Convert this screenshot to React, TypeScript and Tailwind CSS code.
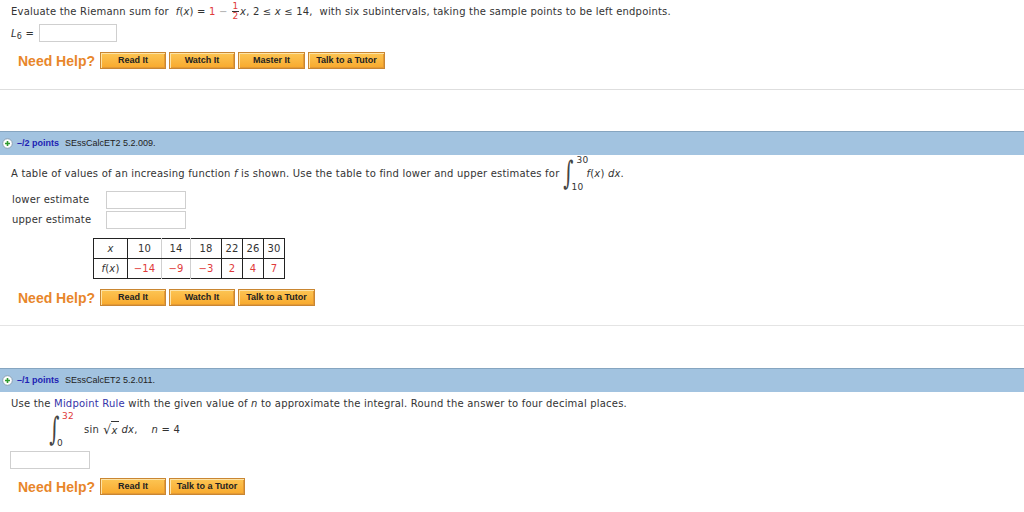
import React from 'react';

const HelpButton: React.FC<{ label: string; width: string }> = ({ label, width }) => (
    <button
        className={`${width} h-[17px] border border-[#c98632] bg-gradient-to-b from-[#fcc553] to-[#f8a92b] shadow-[inset_1px_1px_0_#fde3a6,inset_-1px_-1px_0_#e49a34] text-[9px] font-bold text-[#222] font-['Liberation_Sans',Arial,sans-serif] leading-none tracking-normal`}
    >
        {label}
    </button>
);

const NeedHelp: React.FC<{ buttons: { label: string; width: string }[] }> = ({ buttons }) => (
    <div className="flex items-center pl-[18px] tracking-normal">
        <span className="w-[82px] shrink-0 whitespace-nowrap text-[14px] font-bold text-[#e8862a] font-['Liberation_Sans',Arial,sans-serif] leading-none">Need Help?</span>
        <div className="flex gap-[3px]">
            {buttons.map((b) => (
                <HelpButton key={b.label} label={b.label} width={b.width} />
            ))}
        </div>
    </div>
);

const PlusIcon: React.FC = () => (
    <svg width="11" height="11" viewBox="0 0 11 11">
        <circle cx="5.5" cy="5.5" r="4.8" fill="#fff" stroke="#8aa0b4" strokeWidth="1" />
        <path d="M5.5 3v5M3 5.5h5" stroke="#2f9a2f" strokeWidth="1.6" />
    </svg>
);

const QuestionHeader: React.FC<{ points: string; code: string }> = ({ points, code }) => (
    <div className="h-[24px] border-t border-[#86a5c0] bg-[#a2c3e0] flex items-center pl-[2px] gap-[4px] font-['Liberation_Sans',Arial,sans-serif] text-[9px] tracking-normal">
        <PlusIcon />
        <span className="font-bold text-[#1d22b3]">–/{points} points</span>
        <span className="text-[#222] ml-[2px]">{code}</span>
    </div>
);

const Input: React.FC<{ className?: string }> = ({ className }) => (
    <div className={`h-[18px] border border-[#cfcfcf] bg-white ${className ?? ''}`} />
);

const Integral: React.FC<{ upper: string; lower: string; upperRed?: boolean }> = ({ upper, lower, upperRed }) => (
    <div className="relative w-[22px] h-[33px] shrink-0">
        <span className="absolute left-[-3px] top-[0px] h-[33px] text-[28px] leading-[33px] font-['DejaVu_Serif',serif] text-[#444] scale-y-[1.15] scale-x-[0.7]">∫</span>
        <span className={`absolute left-[12px] top-[-2px] text-[9px] leading-[10px] ${upperRed ? 'text-[#e03a3a]' : ''}`}>{upper}</span>
        <span className="absolute left-[7px] bottom-[-2px] text-[9px] leading-[10px]">{lower}</span>
    </div>
);

const cols = [
    { x: '10', f: '−14', w: 'w-[34px]' },
    { x: '14', f: '−9', w: 'w-[29px]' },
    { x: '18', f: '−3', w: 'w-[31px]' },
    { x: '22', f: '2', w: 'w-[21px]' },
    { x: '26', f: '4', w: 'w-[21px]' },
    { x: '30', f: '7', w: 'w-[21px]' },
];

const App: React.FC = () => {
    return (
        <div className="w-[1024px] h-[512px] overflow-hidden bg-white text-[#333] font-['DejaVu_Sans',Verdana,sans-serif] text-[10px] tracking-[0.2px]">
            {/* previous question tail */}
            <div className="pt-[2px] pl-[11px] leading-[12px] flex items-center whitespace-pre">
                <span>Evaluate the Riemann sum for  <i>f</i>(<i>x</i>) = <span className="text-[#e03a3a]">1</span> <span className="text-[#aaa]">−</span> </span>
                <span className="inline-flex flex-col items-center text-[#e03a3a] text-[9px] leading-[9px] mx-[1px]">
                    <span>1</span>
                    <span className="w-[7px] border-t border-[#333]" />
                    <span>2</span>
                </span>
                <span><i>x</i>, 2 ≤ <i>x</i> ≤ 14,  with six subintervals, taking the sample points to be left endpoints.</span>
            </div>
            <div className="mt-[3px] pl-[11px] flex items-center gap-[4px]">
                <span><i>L</i><sub className="text-[8px]">6</sub> =</span>
                <Input className="w-[78px] ml-[1px]" />
            </div>
            <div className="mt-[10px]">
                <NeedHelp
                    buttons={[
                        { label: 'Read It', width: 'w-[66px]' },
                        { label: 'Watch It', width: 'w-[66px]' },
                        { label: 'Master It', width: 'w-[67px]' },
                        { label: 'Talk to a Tutor', width: 'w-[77px]' },
                    ]}
                />
            </div>
            <div className="mt-[20px] border-t border-[#dedede]" />

            {/* question 2 */}
            <div className="mt-[41px]">
                <QuestionHeader points="2" code="SEssCalcET2 5.2.009." />
            </div>
            <div className="mt-[2px] pl-[11px] flex items-center h-[33px]">
                <span>A table of values of an increasing function <i>f</i> is shown. Use the table to find lower and upper estimates for</span>
                <div className="ml-[5px]">
                    <Integral upper="30" lower="10" />
                </div>
                <span><i>f</i>(<i>x</i>) <i>dx</i>.</span>
            </div>
            <div className="pl-[12px] flex flex-col gap-[1px]">
                <div className="flex items-center h-[19px]">
                    <span className="w-[94px]">lower estimate</span>
                    <Input className="w-[80px]" />
                </div>
                <div className="flex items-center h-[19px]">
                    <span className="w-[94px]">upper estimate</span>
                    <Input className="w-[80px]" />
                </div>
            </div>
            <table className="mt-[9px] ml-[93px] border-collapse border border-[#222] text-center">
                <tbody>
                    <tr className="h-[20px]">
                        <td className="w-[34px] border-r border-b border-[#222]"><i>x</i></td>
                        {cols.map((c, i) => (
                            <td key={c.x} className={`${c.w} border-b border-[#222] ${i < 2 ? 'border-r border-r-[#d0d0d0]' : i < 5 ? 'border-r border-r-[#222]' : ''}`}>{c.x}</td>
                        ))}
                    </tr>
                    <tr className="h-[20px]">
                        <td className="border-r border-[#222]"><i>f</i>(<i>x</i>)</td>
                        {cols.map((c, i) => (
                            <td key={c.x} className={`text-[#e03a3a] ${i < 2 ? 'border-r border-r-[#d0d0d0]' : i < 5 ? 'border-r border-r-[#222]' : ''}`}>{c.f}</td>
                        ))}
                    </tr>
                </tbody>
            </table>
            <div className="mt-[10px]">
                <NeedHelp
                    buttons={[
                        { label: 'Read It', width: 'w-[66px]' },
                        { label: 'Watch It', width: 'w-[66px]' },
                        { label: 'Talk to a Tutor', width: 'w-[77px]' },
                    ]}
                />
            </div>
            <div className="mt-[19px] border-t border-[#e4e4e4]" />

            {/* question 3 */}
            <div className="mt-[42px]">
                <QuestionHeader points="1" code="SEssCalcET2 5.2.011." />
            </div>
            <div className="mt-[6px] pl-[11px] leading-[12px]">
                Use the <span className="text-[#3434a8]">Midpoint Rule</span> with the given value of <i>n</i> to approximate the integral. Round the answer to four decimal places.
            </div>
            <div className="mt-[3px] pl-[50px] flex items-center h-[33px]">
                <Integral upper="32" lower="0" upperRed />
                <span className="ml-[12px]">sin</span>
                <span className="ml-[4px] flex items-center">
                    <span className="text-[13px] leading-none font-['DejaVu_Sans',sans-serif]">√</span>
                    <span className="border-t border-[#333] pt-[1px] pr-[1px]"><i>x</i></span>
                </span>
                <span className="ml-[3px]"><i>dx</i>,</span>
                <span className="ml-[14px]"><i>n</i> = 4</span>
            </div>
            <div className="mt-[5px] pl-[10px]">
                <Input className="w-[80px]" />
            </div>
            <div className="mt-[9px]">
                <NeedHelp
                    buttons={[
                        { label: 'Read It', width: 'w-[66px]' },
                        { label: 'Talk to a Tutor', width: 'w-[76px]' },
                    ]}
                />
            </div>
        </div>
    );
};

export default App;
